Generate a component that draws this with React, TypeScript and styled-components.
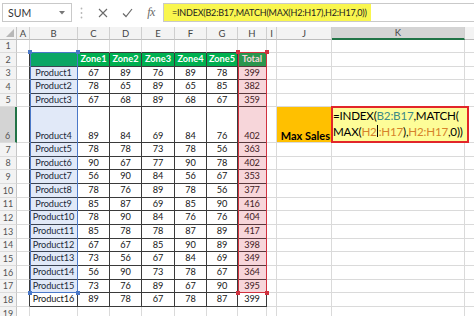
import React from "react";
import styled, { createGlobalStyle, css } from "styled-components";

const GlobalStyle = createGlobalStyle`
  html, body {
    margin: 0;
    padding: 0;
    background: #fff;
    overflow: hidden;
  }
  body {
    font-family: Lato, "Liberation Sans", Arial, sans-serif;
  }
`;

// sheet geometry (row header, A..L)
const COLS = [17, 13, 48, 32, 32, 33, 32, 31, 29, 10, 55, 133, 20];
const LETTERS = ["A", "B", "C", "D", "E", "F", "G", "H", "I", "J", "K", ""];
const ROW_H = [13, 13, 13.5, 13.5, 13.5, 13.5, 36, ...Array(12).fill(13.67), 14];

const DATA = [
  [67, 89, 76, 89, 78, 399],
  [78, 65, 89, 65, 85, 382],
  [67, 68, 89, 68, 67, 359],
  [89, 84, 69, 84, 76, 402],
  [78, 78, 73, 78, 56, 363],
  [90, 67, 77, 90, 78, 402],
  [56, 90, 84, 56, 67, 353],
  [78, 76, 89, 78, 56, 377],
  [85, 87, 69, 85, 90, 416],
  [78, 90, 84, 76, 76, 404],
  [85, 78, 78, 87, 89, 417],
  [67, 67, 85, 90, 89, 398],
  [73, 56, 67, 84, 69, 349],
  [56, 90, 73, 78, 67, 364],
  [73, 76, 89, 67, 90, 395],
  [89, 78, 67, 78, 87, 399],
];

const GRID = "#dadada";
const DARK = "#3a3a3a";
const GREEN = "#00b050";
const XL_GREEN = "#217346";

const inTable = (r: number, c: number) => r >= 2 && r <= 18 && c >= 2 && c <= 8;

const TopBar = styled.div`
  display: flex;
  height: 27px;
  box-sizing: border-box;
  padding: 3px 0 5px 2px;
  background: #fff;
`;

const NameBox = styled.div`
  width: 70px;
  box-sizing: border-box;
  border: 1px solid #c9c9c9;
  display: flex;
  align-items: center;
  justify-content: space-between;
  padding: 0 6px 0 5px;
  font-size: 10.5px;
  color: #333;
`;

const Dots = styled.div`
  width: 19px;
  display: flex;
  align-items: center;
  justify-content: center;
`;

const IconButton = styled.div`
  width: 24px;
  display: flex;
  align-items: center;
  justify-content: center;
  color: #6a6a6a;
`;

const Fx = styled.span`
  font-family: "Liberation Serif", serif;
  font-style: italic;
  font-size: 12px;
  color: #6a6a6a;
  letter-spacing: -0.5px;
`;

const FormulaBox = styled.div`
  flex: 1;
  display: flex;
  border: 1px solid #c9c9c9;
  border-right: none;
  background: #fff;
`;

const Highlight = styled.div`
  display: flex;
  align-items: center;
  background: #f9f64e;
  padding: 0 4px 0 8px;
  font-size: 9px;
  letter-spacing: -0.2px;
  color: #222;
  white-space: nowrap;
`;

const Sheet = styled.div`
  display: grid;
  grid-template-columns: ${COLS.map((w) => `${w}px`).join(" ")};
  grid-template-rows: ${ROW_H.map((h) => `${h}px`).join(" ")};
  height: 289px;
  overflow: hidden;
`;

const Corner = styled.div`
  grid-row: 1;
  grid-column: 1;
  background: #f3f3f3;
  border-right: 1px solid #c6c6c6;
  border-bottom: 1px solid #bdbdbd;
  box-sizing: border-box;
  display: flex;
  align-items: flex-end;
  justify-content: flex-end;
  padding: 0 2px 2px 0;
`;

const ColHead = styled.div<{ $c: number; $sel?: boolean }>`
  grid-row: 1;
  grid-column: ${(p) => p.$c + 1};
  box-sizing: border-box;
  background: ${(p) => (p.$sel ? "#d4d4d4" : "#f3f3f3")};
  border-right: 1px solid #cfcfcf;
  border-bottom: ${(p) => (p.$sel ? `2px solid ${XL_GREEN}` : "1px solid #bdbdbd")};
  display: flex;
  align-items: center;
  justify-content: center;
  font-size: 9.5px;
  color: #444;
  overflow: hidden;
`;

const RowHead = styled.div<{ $r: number; $sel?: boolean }>`
  grid-row: ${(p) => p.$r + 1};
  grid-column: 1;
  box-sizing: border-box;
  background: ${(p) => (p.$sel ? "#d4d4d4" : "#f3f3f3")};
  border-right: ${(p) => (p.$sel ? `2px solid ${XL_GREEN}` : "1px solid #c6c6c6")};
  border-bottom: 1px solid #dcdcdc;
  display: flex;
  align-items: flex-end;
  justify-content: center;
  font-size: 9px;
  line-height: 12px;
  color: #555;
`;

const Cell = styled.div<{
  $r: number;
  $c: number;
  $fill?: string;
  $bold?: boolean;
  $color?: string;
  $align?: string;
  $right: string;
  $bottom: string;
}>`
  grid-row: ${(p) => p.$r + 1};
  grid-column: ${(p) => p.$c + 1};
  box-sizing: border-box;
  border-right: 1px solid ${(p) => p.$right};
  border-bottom: 1px solid ${(p) => p.$bottom};
  background: ${(p) => p.$fill ?? "#fff"};
  display: flex;
  align-items: flex-end;
  justify-content: ${(p) => p.$align ?? "center"};
  padding: 0 0 0.5px 0;
  font-size: 9.2px;
  letter-spacing: ${(p) => (p.$bold ? "0" : "-0.1px")};
  line-height: 12px;
  font-weight: ${(p) => (p.$bold ? 700 : 400)};
  color: ${(p) => p.$color ?? "#151515"};
  white-space: nowrap;
`;

const Range = styled.div<{ $c: number; $color: string; $tint: string }>`
  grid-column: ${(p) => p.$c + 1};
  grid-row: 3 / 19;
  position: relative;
  z-index: 2;
  margin-top: -1px;
  box-sizing: border-box;
  border: 1.5px solid ${(p) => p.$color};
  background: ${(p) => p.$tint};
  pointer-events: none;
`;

const Handle = styled.span<{ $color: string; $top?: boolean; $left?: boolean }>`
  position: absolute;
  width: 4px;
  height: 4px;
  background: ${(p) => p.$color};
  ${(p) => (p.$top ? css`top: -3px;` : css`bottom: -3px;`)}
  ${(p) => (p.$left ? css`left: -3px;` : css`right: -3px;`)}
`;

const Editor = styled.div`
  grid-column: 12;
  grid-row: 7;
  position: relative;
  z-index: 3;
  margin: -1px -4px 0 -1px;
  box-sizing: border-box;
  border: 2px solid #e2262a;
  background: #fdfd98;
  display: flex;
  flex-direction: column;
  justify-content: flex-end;
  padding: 0 0 0.5px 0;
  font-size: 11.6px;
  letter-spacing: -0.2px;
  line-height: 16.5px;
  color: #000;
  white-space: nowrap;
`;

const Ref = styled.span<{ $color: string }>`
  color: ${(p) => p.$color};
`;

const Caret = styled.span`
  display: inline-block;
  width: 1px;
  height: 12px;
  margin: 0 0.5px;
  background: #000;
  vertical-align: -1px;
`;

const MaxSales = styled(Cell)`
  font-size: 11px;
  padding-right: 1px;
  color: #000;
`;

const CloseIcon = () => (
  <svg width="10" height="10" viewBox="0 0 10 10">
    <path d="M1 1 L9 9 M9 1 L1 9" stroke="#6a6a6a" strokeWidth="1.1" fill="none" />
  </svg>
);

const CheckIcon = () => (
  <svg width="11" height="10" viewBox="0 0 11 10">
    <path d="M1 5.5 L4 8.5 L10 1" stroke="#6a6a6a" strokeWidth="1.2" fill="none" />
  </svg>
);

const DotsIcon = () => (
  <svg width="3" height="12" viewBox="0 0 3 12">
    <circle cx="1.5" cy="1.5" r="0.9" fill="#b5b5b5" />
    <circle cx="1.5" cy="6" r="0.9" fill="#b5b5b5" />
    <circle cx="1.5" cy="10.5" r="0.9" fill="#b5b5b5" />
  </svg>
);

const ArrowIcon = () => (
  <svg width="6" height="4" viewBox="0 0 6 4">
    <path d="M0 0 H6 L3 3.5 Z" fill="#777" />
  </svg>
);

const CornerIcon = () => (
  <svg width="8" height="8" viewBox="0 0 8 8">
    <path d="M8 0 V8 H0 Z" fill="#b8b8b8" />
  </svg>
);

function renderCell(r: number, c: number) {
  const right = inTable(r, c) || inTable(r, c + 1) ? DARK : GRID;
  const bottom = inTable(r, c) || inTable(r + 1, c) ? DARK : GRID;
  const base = { $r: r, $c: c, $right: right, $bottom: bottom };

  if (r === 2 && inTable(r, c)) {
    const label = c === 2 ? "" : c === 8 ? "Total" : `Zone${c - 2}`;
    return (
      <Cell key={`${r}-${c}`} {...base} $fill={GREEN} $bold $color="#fff">
        {label}
      </Cell>
    );
  }
  if (inTable(r, c)) {
    const text = c === 2 ? `Product${r - 2}` : DATA[r - 3][c - 3];
    return (
      <Cell key={`${r}-${c}`} {...base}>
        {text}
      </Cell>
    );
  }
  if (r === 6 && c === 10) {
    return (
      <MaxSales key={`${r}-${c}`} {...base} $fill="#ffc000" $bold $align="flex-end">
        Max Sales
      </MaxSales>
    );
  }
  return <Cell key={`${r}-${c}`} {...base} />;
}

export default function App() {
  const rows = Array.from({ length: 19 }, (_, i) => i + 1);
  const cols = Array.from({ length: 12 }, (_, i) => i + 1);

  return (
    <>
      <GlobalStyle />
      <TopBar>
        <NameBox>
          SUM
          <ArrowIcon />
        </NameBox>
        <Dots>
          <DotsIcon />
        </Dots>
        <IconButton>
          <CloseIcon />
        </IconButton>
        <IconButton>
          <CheckIcon />
        </IconButton>
        <IconButton>
          <Fx>fx</Fx>
        </IconButton>
        <FormulaBox>
          <Highlight>=INDEX(B2:B17,MATCH(MAX(H2:H17),H2:H17,0))</Highlight>
        </FormulaBox>
      </TopBar>

      <Sheet>
        <Corner>
          <CornerIcon />
        </Corner>
        {LETTERS.map((l, i) => (
          <ColHead key={`c${i}`} $c={i + 1} $sel={l === "K"}>
            {l}
          </ColHead>
        ))}
        {rows.map((r) => (
          <RowHead key={`h${r}`} $r={r} $sel={r === 6}>
            {r}
          </RowHead>
        ))}
        {rows.map((r) => cols.map((c) => renderCell(r, c)))}

        <Range $c={2} $color="#4a78c8" $tint="rgba(70, 120, 210, 0.16)">
          <Handle $color="#4a78c8" $top $left />
          <Handle $color="#4a78c8" $top />
          <Handle $color="#4a78c8" $left />
          <Handle $color="#4a78c8" />
        </Range>
        <Range $c={8} $color="#d0323f" $tint="rgba(215, 50, 70, 0.2)">
          <Handle $color="#d0323f" $top $left />
          <Handle $color="#d0323f" $top />
          <Handle $color="#d0323f" $left />
          <Handle $color="#d0323f" />
        </Range>

        <Editor>
          <div>
            =INDEX(<Ref $color="#3d8a86">B2:B17</Ref>,MATCH(
          </div>
          <div>
            MAX(<Ref $color="#d6822a">H2</Ref>
            <Caret />
            <Ref $color="#d6822a">:H17</Ref>),<Ref $color="#d6822a">H2:H17</Ref>,0))
          </div>
        </Editor>
      </Sheet>
    </>
  );
}
